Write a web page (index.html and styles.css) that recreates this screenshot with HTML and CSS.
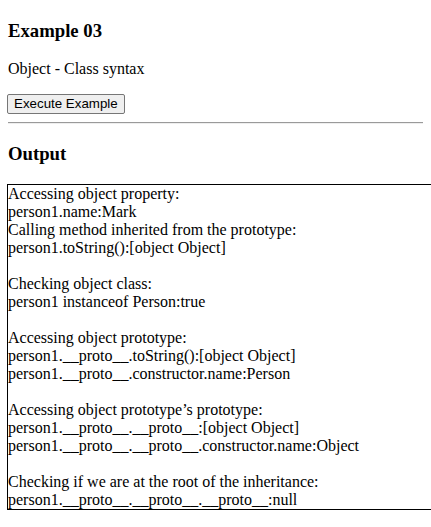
FILE: index.html
```html
<!DOCTYPE html>
<html>
<head>
<meta charset="utf-8">
<link rel="stylesheet" href="styles.css">
</head>
<body>
<main class="page">
<h3 class="title">Example 03</h3>
<p class="desc">Object - Class syntax</p>
<button class="run">Execute Example</button>
<hr class="sep">
<h3 class="title">Output</h3>
<div class="output">
<div>Accessing object property:</div>
<div>person1.name:Mark</div>
<div>Calling method inherited from the prototype:</div>
<div>person1.toString():[object Object]</div>
<div class="blank"></div>
<div>Checking object class:</div>
<div>person1 instanceof Person:true</div>
<div class="blank"></div>
<div>Accessing object prototype:</div>
<div>person1.__proto__.toString():[object Object]</div>
<div>person1.__proto__.constructor.name:Person</div>
<div class="blank"></div>
<div>Accessing object prototype’s prototype:</div>
<div>person1.__proto__.__proto__:[object Object]</div>
<div>person1.__proto__.__proto__.constructor.name:Object</div>
<div class="blank"></div>
<div>Checking if we are at the root of the inheritance:</div>
<div>person1.__proto__.__proto__.__proto__:null</div>
</div>
</main>
</body>
</html>
```

FILE: styles.css
```css
body {
  margin: 0;
  font-family: "Liberation Serif", "Times New Roman", serif;
  font-size: 16px;
  color: #000;
  background: #fff;
}
.page {
  display: block;
  overflow: hidden;
  padding: 1px 8px 8px 8px;
}
.title {
  font-size: 1.17em;
  font-weight: bold;
  margin: 1em 0;
}
.desc {
  margin: 1em 0;
}
.run {
  font-family: "Liberation Sans", Arial, sans-serif;
  font-size: 13.33px;
  color: #000;
  background: #efefef;
  border: 1px solid #767676;
  border-radius: 2px;
  padding: 1px 6px;
  margin: 0 0 0 -1px;
  height: 20px;
  line-height: 16px;
}
.sep {
  margin: 8px 0;
  border: 0;
  border-top: 1px solid #9a9a9a;
  border-bottom: 1px solid #eee;
  height: 0;
}
.output {
  border: 1px solid #000;
  width: 440px;
  margin-left: -1px;
  line-height: 18px;
}
.blank {
  height: 18px;
}
```
